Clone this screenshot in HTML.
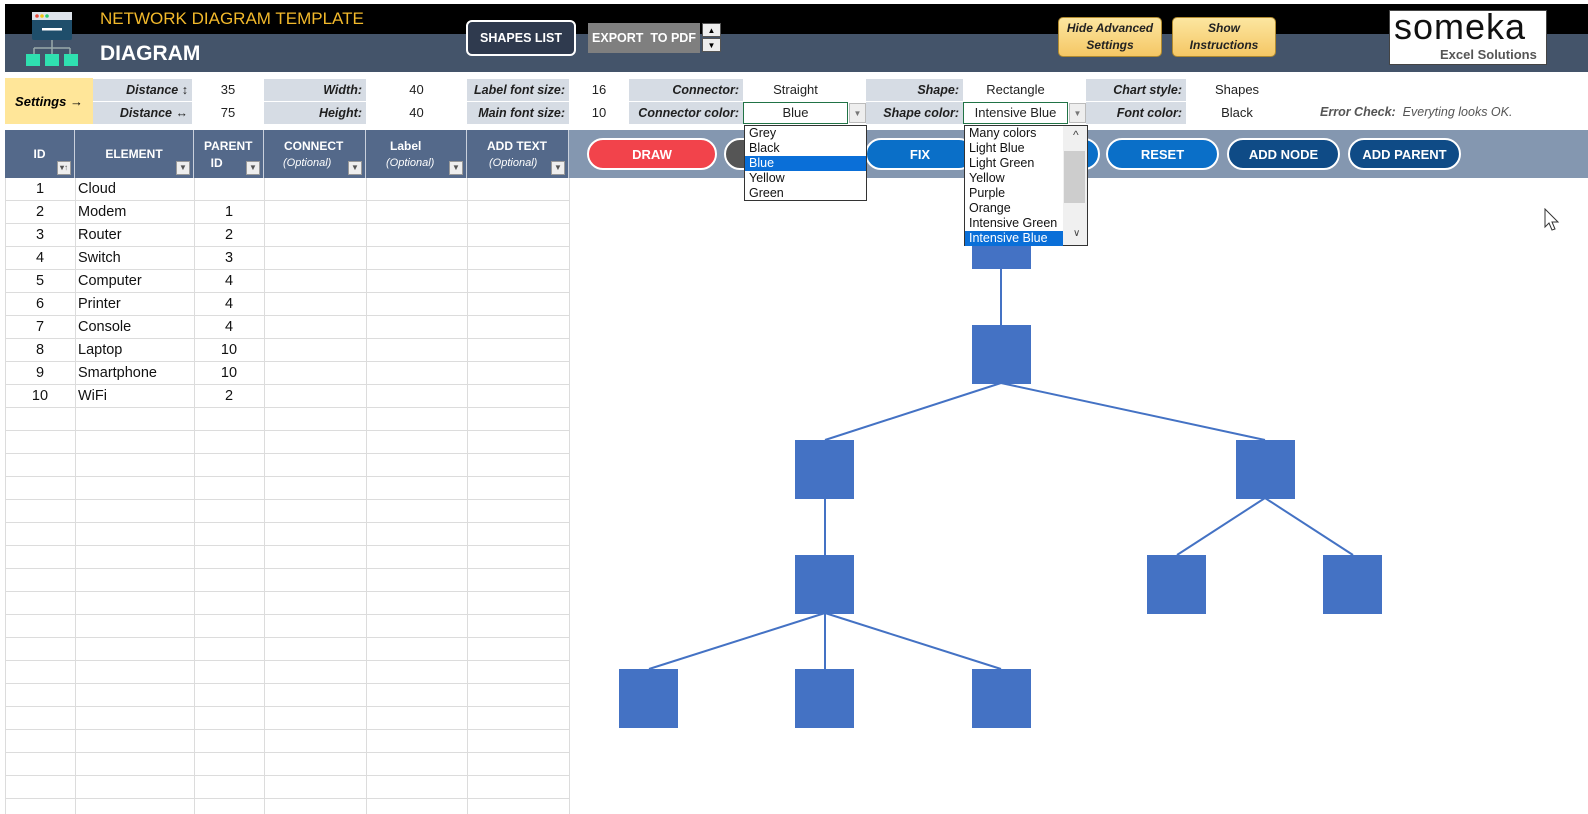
<!DOCTYPE html>
<html><head><meta charset="utf-8"><style>
*{margin:0;padding:0;box-sizing:border-box}
body{width:1588px;height:814px;background:#fff;position:relative;overflow:hidden;font-family:"Liberation Sans",sans-serif;}
.a{position:absolute}
.c{display:flex;align-items:center;justify-content:center}
.lbl{position:absolute;background:#d6dce4;font-style:italic;font-weight:bold;font-size:12.5px;color:#1f1f1f;text-align:right;padding-right:4px;line-height:22px;height:22px}
.val{position:absolute;background:#fff;font-size:13px;text-align:center;line-height:22px;height:22px;color:#222}
.hd{position:absolute;top:130px;height:48px;color:#fff;font-weight:bold;font-size:12px;text-align:center;border-right:1px solid #c9d0dc}
.hd i{display:block;font-weight:normal;font-size:11px}
.fb{position:absolute;width:14px;height:14px;background:#eee;border:1px solid #999;bottom:3px;right:3px;font-size:8px;color:#555;line-height:12px;text-align:center}
.btn{position:absolute;top:138px;height:32px;border-radius:16px;border:2px solid #fff;color:#fff;font-weight:bold;font-size:13px;display:flex;align-items:center;justify-content:center}
.cell{position:absolute;font-size:14.5px;color:#111;line-height:23px}
.box{position:absolute;width:59px;height:59px;background:#4472c4}
.dd{position:absolute;background:#fff;border:1px solid #333;font-size:12.5px;line-height:15px;color:#111}
.dd div{padding-left:4px}
.sel{background:#0a6fd8;color:#fff}
</style></head><body>
<!-- header -->
<div class="a" style="left:5px;top:4px;width:1583px;height:30px;background:#000"></div>
<div class="a" style="left:5px;top:34px;width:1583px;height:38px;background:#44546a"></div>
<svg class="a" style="left:22px;top:8px" width="60" height="60" viewBox="0 0 60 60">
<rect x="10" y="4" width="40" height="28" rx="2" fill="#1f4e6b"/><rect x="10" y="4" width="40" height="8" fill="#dde3ea"/>
<circle cx="15" cy="8" r="1.8" fill="#e74c3c"/><circle cx="20" cy="8" r="1.8" fill="#f1c40f"/><circle cx="25" cy="8" r="1.8" fill="#2ecc71"/>
<rect x="20" y="20" width="20" height="2.5" fill="#fff"/>
<path d="M30 32v8M12 40h36M12 40v6M30 40v6M48 40v6" stroke="#9aa" stroke-width="1.5" fill="none"/>
<rect x="4" y="46" width="14" height="12" fill="#2fe0b0"/><rect x="23" y="46" width="14" height="12" fill="#2fe0b0"/><rect x="42" y="46" width="14" height="12" fill="#2fe0b0"/></svg>
<div class="a" style="left:100px;top:9px;color:#f2b92b;font-size:17px">NETWORK DIAGRAM TEMPLATE</div>
<div class="a" style="left:100px;top:42px;color:#fff;font-size:21px;font-weight:bold">DIAGRAM</div>
<div class="a c" style="left:466px;top:20px;width:110px;height:36px;background:#2f3a4e;border:2px solid #fff;border-radius:6px;color:#fff;font-weight:bold;font-size:12.5px">SHAPES LIST</div>
<div class="a c" style="left:588px;top:23px;width:112px;height:30px;background:#7f7f7f;color:#fff;font-weight:bold;font-size:12.5px">EXPORT&nbsp; TO PDF</div>
<div class="a c" style="left:702px;top:23px;width:19px;height:14px;background:#eee;border:1px solid #555;font-size:8px">▲</div>
<div class="a c" style="left:702px;top:38px;width:19px;height:14px;background:#eee;border:1px solid #555;font-size:8px">▼</div>
<div class="a c" style="left:1058px;top:17px;width:104px;height:40px;background:linear-gradient(#fce6a0,#f5c765);border:1px solid #b08a30;border-radius:5px;font-style:italic;font-weight:bold;font-size:12px;text-align:center;line-height:17px;color:#222">Hide Advanced<br>Settings</div>
<div class="a c" style="left:1172px;top:17px;width:104px;height:40px;background:linear-gradient(#fce6a0,#f5c765);border:1px solid #b08a30;border-radius:5px;font-style:italic;font-weight:bold;font-size:12px;text-align:center;line-height:17px;color:#222">Show<br>Instructions</div>
<div class="a" style="left:1389px;top:10px;width:158px;height:55px;background:#fff;border:1px solid #444"></div>
<div class="a" style="left:1394px;top:6px;font-size:36px;color:#111;letter-spacing:1px">someka</div>
<div class="a" style="left:1440px;top:47px;font-size:13px;font-weight:bold;color:#555">Excel Solutions</div>
<!-- settings -->
<div class="a c" style="left:5px;top:78px;width:88px;height:46px;background:#ffe699;font-style:italic;font-weight:bold;font-size:13px">Settings →</div>
<div class="lbl" style="left:93px;top:79px;width:99px">Distance ↕</div><div class="val" style="left:192px;top:79px;width:72px">35</div>
<div class="lbl" style="left:93px;top:102px;width:99px">Distance ↔</div><div class="val" style="left:192px;top:102px;width:72px">75</div>
<div class="lbl" style="left:264px;top:79px;width:102px">Width:</div><div class="val" style="left:366px;top:79px;width:101px">40</div>
<div class="lbl" style="left:264px;top:102px;width:102px">Height:</div><div class="val" style="left:366px;top:102px;width:101px">40</div>
<div class="lbl" style="left:467px;top:79px;width:102px">Label font size:</div><div class="val" style="left:569px;top:79px;width:60px">16</div>
<div class="lbl" style="left:467px;top:102px;width:102px">Main font size:</div><div class="val" style="left:569px;top:102px;width:60px">10</div>
<div class="lbl" style="left:629px;top:79px;width:114px">Connector:</div><div class="val" style="left:743px;top:79px;width:105px">Straight</div>
<div class="lbl" style="left:629px;top:102px;width:114px">Connector color:</div><div class="val" style="left:743px;top:102px;width:105px;border:1.5px solid #217346;line-height:19px">Blue</div>
<div class="a c" style="left:849px;top:103px;width:17px;height:20px;background:#eee;border:1px solid #bbb;font-size:8px;color:#777">▼</div>
<div class="lbl" style="left:866px;top:79px;width:97px;background:#d6dce4">Shape:</div><div class="val" style="left:963px;top:79px;width:105px">Rectangle</div>
<div class="lbl" style="left:866px;top:102px;width:97px">Shape color:</div><div class="val" style="left:963px;top:102px;width:105px;border:1.5px solid #217346;line-height:19px">Intensive Blue</div>
<div class="a c" style="left:1069px;top:103px;width:17px;height:20px;background:#eee;border:1px solid #bbb;font-size:8px;color:#777">▼</div>
<div class="lbl" style="left:1086px;top:79px;width:100px">Chart style:</div><div class="val" style="left:1186px;top:79px;width:102px">Shapes</div>
<div class="lbl" style="left:1086px;top:102px;width:100px">Font color:</div><div class="val" style="left:1186px;top:102px;width:102px">Black</div>
<div class="a" style="left:1320px;top:105px;font-size:12.5px;font-style:italic;color:#555"><b>Error Check:</b>&nbsp; Everyting looks OK.</div>
<!-- table header -->
<div class="a" style="left:5px;top:130px;width:564px;height:48px;background:#54698a"></div>
<div class="a" style="left:569px;top:130px;width:1019px;height:48px;background:#8497b0"></div>
<div class="hd" style="left:5px;width:70px;line-height:48px">ID<span class="fb" style="line-height:11px">▾↑</span></div>
<div class="hd" style="left:75px;width:119px;line-height:48px">ELEMENT<span class="fb">▼</span></div>
<div class="hd" style="left:194px;width:70px;padding-top:8px;line-height:17px;text-align:left;padding-left:10px">PARENT<br>&nbsp;&nbsp;ID<span class="fb">▼</span></div>
<div class="hd" style="left:264px;width:102px;padding-top:8px;line-height:17px;text-align:left;padding-left:20px">CONNECT<i style="margin-left:-1px">(Optional)</i><span class="fb">▼</span></div>
<div class="hd" style="left:366px;width:101px;padding-top:8px;line-height:17px;text-align:left;padding-left:24px">Label<i style="margin-left:-4px">(Optional)</i><span class="fb">▼</span></div>
<div class="hd" style="left:467px;width:102px;padding-top:8px;line-height:17px;text-align:left;padding-left:20px">ADD TEXT<i style="margin-left:2px">(Optional)</i><span class="fb">▼</span></div>
<div class="btn" style="left:587px;width:130px;background:#f2434b">DRAW</div>
<div class="btn" style="left:724px;width:40px;background:#555"></div>
<div class="btn" style="left:865px;width:110px;background:#0a6fc8">FIX</div>
<div class="btn" style="left:1060px;width:40px;background:#0a6fc8"></div>
<div class="btn" style="left:1106px;width:113px;background:#0a6fc8">RESET</div>
<div class="btn" style="left:1227px;width:113px;background:#0f4b86">ADD NODE</div>
<div class="btn" style="left:1348px;width:113px;background:#0f4b86">ADD PARENT</div>
<!-- grid -->
<div class="a" style="left:5px;top:178px;width:564px;height:636px;background:repeating-linear-gradient(to bottom,transparent 0,transparent 22px,#dcdcdc 22px,#dcdcdc 23px)"></div>
<div class="a" style="left:5px;top:178px;width:1px;height:636px;background:#dcdcdc"></div>
<div class="a" style="left:75px;top:178px;width:1px;height:636px;background:#dcdcdc"></div>
<div class="a" style="left:194px;top:178px;width:1px;height:636px;background:#dcdcdc"></div>
<div class="a" style="left:264px;top:178px;width:1px;height:636px;background:#dcdcdc"></div>
<div class="a" style="left:366px;top:178px;width:1px;height:636px;background:#dcdcdc"></div>
<div class="a" style="left:467px;top:178px;width:1px;height:636px;background:#dcdcdc"></div>
<div class="a" style="left:569px;top:178px;width:1px;height:636px;background:#dcdcdc"></div>
<div class="cell" style="left:5px;top:178px;width:70px;text-align:center">1<br>2<br>3<br>4<br>5<br>6<br>7<br>8<br>9<br>10</div>
<div class="cell" style="left:78px;top:178px">Cloud<br>Modem<br>Router<br>Switch<br>Computer<br>Printer<br>Console<br>Laptop<br>Smartphone<br>WiFi</div>
<div class="cell" style="left:194px;top:178px;width:70px;text-align:center"><br>1<br>2<br>3<br>4<br>4<br>4<br>10<br>10<br>2</div>
<!-- diagram -->
<svg class="a" style="left:0;top:0" width="1588" height="814">
<g stroke="#4472c4" stroke-width="2">
<line x1="1001" y1="268" x2="1001" y2="325"/>
<line x1="1001" y1="383" x2="825" y2="440"/><line x1="1001" y1="383" x2="1265" y2="440"/>
<line x1="825" y1="498" x2="825" y2="555"/>
<line x1="1265" y1="498" x2="1177" y2="555"/><line x1="1265" y1="498" x2="1353" y2="555"/>
<line x1="825" y1="613" x2="649" y2="669"/><line x1="825" y1="613" x2="825" y2="669"/><line x1="825" y1="613" x2="1001" y2="669"/>
</g></svg>
<div class="box" style="left:972px;top:210px"></div>
<div class="box" style="left:972px;top:325px"></div>
<div class="box" style="left:795px;top:440px"></div>
<div class="box" style="left:1236px;top:440px"></div>
<div class="box" style="left:795px;top:555px"></div>
<div class="box" style="left:1147px;top:555px"></div>
<div class="box" style="left:1323px;top:555px"></div>
<div class="box" style="left:619px;top:669px"></div>
<div class="box" style="left:795px;top:669px"></div>
<div class="box" style="left:972px;top:669px"></div>
<!-- dropdowns -->
<div class="dd" style="left:744px;top:125px;width:123px;height:76px;padding-top:0"><div>Grey</div><div>Black</div><div class="sel">Blue</div><div>Yellow</div><div>Green</div></div>
<div class="dd" style="left:964px;top:125px;width:124px;height:121px"><div>Many colors</div><div>Light Blue</div><div>Light Green</div><div>Yellow</div><div>Purple</div><div>Orange</div><div style="white-space:nowrap">Intensive Green</div><div class="sel" style="width:98px">Intensive Blue</div>
<div class="a" style="left:98px;top:0;width:24px;height:119px;background:#f0f0f0"></div>
<div class="a" style="left:99px;top:25px;width:21px;height:52px;background:#cdcdcd"></div>
<div class="a" style="left:104px;top:2px;font-size:12px;color:#444">^</div>
<div class="a" style="left:104px;top:100px;font-size:10px;color:#444">∨</div></div>
<svg class="a" style="left:1544px;top:208px" width="16" height="24"><path d="M1 1v18l4-4 3 7 3-1-3-7h6z" fill="#fff" stroke="#333" stroke-width="1"/></svg>
</body></html>
